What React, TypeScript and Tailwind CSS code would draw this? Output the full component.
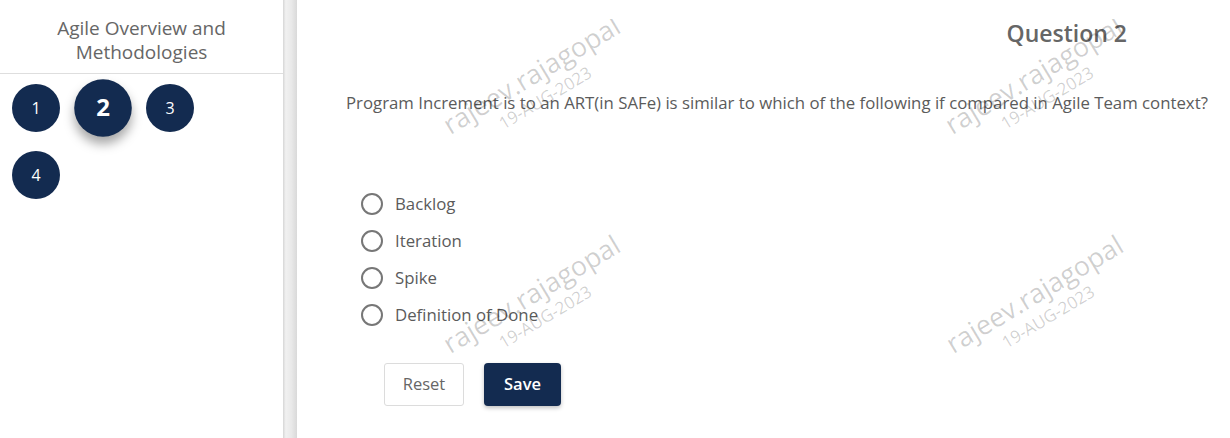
import { useState } from 'react'

const navy = 'bg-[#132b50]'

const options = ['Backlog', 'Iteration', 'Spike', 'Definition of Done']

// Faint rotated user stamp drawn over the question area
function Watermark({ className }: { className: string }) {
	return (
		<div
			className={`absolute -translate-x-1/2 -translate-y-1/2 rotate-[-31deg] flex flex-col items-center whitespace-nowrap text-[rgba(0,0,0,0.19)] ${className}`}
		>
			<span className="text-[27px] leading-[28px]">rajeev.rajagopal</span>
			<span className="text-[17px] leading-[26px]">19-AUG-2023</span>
		</div>
	)
}

function QuestionBubble({ n, active }: { n: number; active?: boolean }) {
	return (
		<div
			className={`w-12 h-12 rounded-full ${navy} text-white flex items-center justify-center ${
				active ? 'scale-[1.2] text-[20px] font-bold shadow-[0_6px_9px_rgba(0,0,0,0.35)]' : 'text-[16px]'
			}`}
		>
			{n}
		</div>
	)
}

export default function App() {
	const [selected, setSelected] = useState<string | null>(null)

	return (
		<div className="flex h-screen bg-white font-['Open_Sans',sans-serif] overflow-hidden">
			{/* Sidebar */}
			<aside className="w-[283px] shrink-0">
				<div className="pt-[16px] pb-[9px] border-b border-[#dedede] text-center text-[19px] leading-6 text-[#666]">
					Agile Overview and
					<br />
					Methodologies
				</div>
				<div className="pl-[12px] pt-[10px] grid grid-cols-[repeat(3,48px)] gap-x-[19px] gap-y-[19px]">
					<QuestionBubble n={1} />
					<QuestionBubble n={2} active />
					<QuestionBubble n={3} />
					<QuestionBubble n={4} />
				</div>
			</aside>

			{/* Splitter */}
			<div className="w-[14px] shrink-0 bg-[linear-gradient(to_right,#d6d6d6,#f1f1f1_20%,#e9e9e9_60%,#d9d9d9)]" />

			{/* Question panel */}
			<main className="relative flex-1 pt-[18px]">
				<h2 className="text-right pr-[103px] text-[23px] font-semibold leading-[30px] text-[#666]">Question 2</h2>
				<p className="mt-[43px] pl-[49px] text-[16.8px] leading-6 text-[#5b5b5b] whitespace-nowrap">
					Program Increment is to an ART(in SAFe) is similar to which of the following if compared in Agile Team context?
				</p>

				<div className="mt-[70px] pl-[64px]">
					{options.map((o) => (
						<label key={o} className="h-[37px] flex items-center gap-[12px] cursor-pointer">
							<span
								onClick={() => setSelected(o)}
								className="w-[22px] h-[22px] rounded-full border-2 border-[#777] flex items-center justify-center"
							>
								{selected === o && <span className={`w-[10px] h-[10px] rounded-full ${navy}`} />}
							</span>
							<span className="text-[16.8px] text-[#5b5b5b]">{o}</span>
						</label>
					))}
				</div>

				<div className="mt-[30px] pl-[87px] flex gap-[20px]">
					<button
						onClick={() => setSelected(null)}
						className="w-[80px] h-[43px] rounded-[3px] border border-[#dcdcdc] bg-white text-[16.5px] text-[#666]"
					>
						Reset
					</button>
					<button
						className={`w-[77px] h-[43px] rounded-[4px] ${navy} text-white text-[16.5px] font-semibold shadow-[0_2px_4px_rgba(0,0,0,0.25)]`}
					>
						Save
					</button>
				</div>

				<div className="pointer-events-none absolute inset-x-0 top-[19px] bottom-0 overflow-hidden">
					<Watermark className="left-[241px] top-[67px]" />
					<Watermark className="left-[743px] top-[67px]" />
					<Watermark className="left-[241px] top-[286px]" />
					<Watermark className="left-[744px] top-[286px]" />
				</div>
			</main>
		</div>
	)
}
